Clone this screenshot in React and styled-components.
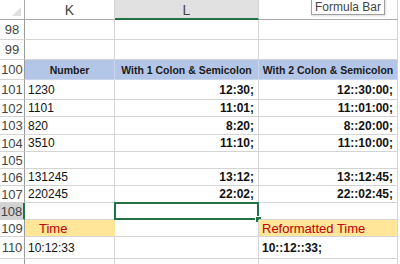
import React from "react";
import styled, { createGlobalStyle } from "styled-components";

const GlobalStyle = createGlobalStyle`
  html, body {
    margin: 0;
    padding: 0;
    background: #fff;
    overflow: hidden;
  }
`;

const COLS = ["K", "L", "M"];
const ROW_HEIGHTS = {
  98: 20, 99: 20, 100: 20, 101: 20, 102: 17, 103: 18, 104: 17,
  105: 17, 106: 17, 107: 17, 108: 17, 109: 17, 110: 22, 111: 20,
};

const rows = [
  { n: 98 },
  { n: 99 },
  { n: 100, head: ["Number", "With 1 Colon & Semicolon", "With 2 Colon & Semicolon"] },
  { n: 101, cells: ["1230", "12:30;", "12::30:00;"] },
  { n: 102, cells: ["1101", "11:01;", "11::01:00;"] },
  { n: 103, cells: ["820", "8:20;", "8::20:00;"] },
  { n: 104, cells: ["3510", "11:10;", "11::10:00;"] },
  { n: 105 },
  { n: 106, cells: ["131245", "13:12;", "13::12:45;"] },
  { n: 107, cells: ["220245", "22:02;", "22::02:45;"] },
  { n: 108, selected: true },
  { n: 109, labels: true },
  { n: 110, last: true },
  { n: 111, hidden: true },
];

export default function App() {
  return (
    <>
      <GlobalStyle />
      <Sheet>
        <Grid
          style={{
            gridTemplateRows: `20px ${rows.map((r) => ROW_HEIGHTS[r.n] + "px").join(" ")}`,
          }}
        >
          <Corner>
            <CornerMark />
          </Corner>
          {COLS.map((c) => (
            <ColHead key={c} active={c === "L"}>
              {c}
            </ColHead>
          ))}
          {rows.map((r) => (
            <React.Fragment key={r.n}>
              <RowHead active={r.selected}>{r.hidden ? null : r.n}</RowHead>
              {r.head &&
                r.head.map((t) => (
                  <HeadCell key={t}>{t}</HeadCell>
                ))}
              {r.cells && (
                <>
                  <Cell>{r.cells[0]}</Cell>
                  <Cell bold align="right">{r.cells[1]}</Cell>
                  <Cell bold align="right">{r.cells[2]}</Cell>
                </>
              )}
              {r.selected && (
                <>
                  <Cell />
                  <Cell>
                    <Selection>
                      <FillHandle />
                    </Selection>
                  </Cell>
                  <Cell />
                </>
              )}
              {r.labels && (
                <>
                  <LabelCell indent>Time</LabelCell>
                  <Cell />
                  <LabelCell>Reformatted Time</LabelCell>
                </>
              )}
              {r.last && (
                <>
                  <Cell>10:12:33</Cell>
                  <Cell />
                  <Cell bold>10::12::33;</Cell>
                </>
              )}
              {!r.head && !r.cells && !r.selected && !r.labels && !r.last && (
                <>
                  <Cell />
                  <Cell />
                  <Cell />
                </>
              )}
            </React.Fragment>
          ))}
        </Grid>
        <Tooltip>Formula Bar</Tooltip>
      </Sheet>
    </>
  );
}

const Sheet = styled.div`
  position: relative;
  width: 400px;
  height: 264px;
  overflow: hidden;
  background: #fff;
`;

const Grid = styled.div`
  display: grid;
  grid-template-columns: 25px 90px 144px 139px 20px;
  font-family: "Liberation Sans", Arial, sans-serif;
  color: #222;
`;

const Corner = styled.div`
  position: relative;
  background: #fff;
  border-right: 1px solid #ababab;
  border-bottom: 1px solid #ababab;
  grid-column: 1;
`;

const CornerMark = styled.div`
  position: absolute;
  right: 3px;
  bottom: 3px;
  width: 0;
  height: 0;
  border-left: 9px solid transparent;
  border-bottom: 9px solid #dfdfdf;
`;

const ColHead = styled.div`
  display: flex;
  align-items: center;
  justify-content: center;
  font-family: "Liberation Sans", Arial, sans-serif;
  font-size: 14px;
  color: #444;
  background: ${(p) => (p.active ? "#e1e1e1" : "#fff")};
  border-right: 1px solid #d4d4d4;
  border-bottom: ${(p) => (p.active ? "2px solid #217346" : "1px solid #ababab")};
  box-sizing: border-box;
  padding-top: ${(p) => (p.active ? "1px" : "0")};
`;

const RowHead = styled.div`
  grid-column: 1;
  display: flex;
  align-items: center;
  justify-content: center;
  font-size: 13px;
  color: #444;
  background: ${(p) => (p.active ? "#d2d2d2" : "#fff")};
  border-right: ${(p) => (p.active ? "2px solid #217346" : "1px solid #9b9b9b")};
  border-bottom: 1px solid #d4d4d4;
  box-sizing: border-box;
`;

const Cell = styled.div`
  position: relative;
  display: flex;
  align-items: center;
  justify-content: ${(p) => (p.align === "right" ? "flex-end" : "flex-start")};
  padding: 0 4px 0 3px;
  font-size: 12px;
  font-weight: ${(p) => (p.bold ? 700 : 400)};
  color: #111;
  white-space: nowrap;
  border-right: 1px solid #d4d4d4;
  border-bottom: 1px solid #d4d4d4;
  box-sizing: border-box;
  min-width: 0;
`;

const HeadCell = styled(Cell)`
  justify-content: center;
  padding: 0;
  background: #b4c6e7;
  font-size: 10.5px;
  font-weight: 700;
  color: #1a1a1a;
  border-right-color: #c9d5ec;
  border-bottom-color: #c9d5ec;
`;

const LabelCell = styled(Cell)`
  background: #ffe699;
  color: #c00000;
  font-size: 13px;
  padding-left: ${(p) => (p.indent ? "14px" : "3px")};
  border-right-color: ${(p) => (p.indent ? "#ffe699" : "#d4d4d4")};
`;

const Selection = styled.div`
  position: absolute;
  left: -1px;
  top: -1px;
  right: -1px;
  bottom: -1px;
  border: 2px solid #217346;
  pointer-events: none;
`;

const FillHandle = styled.div`
  position: absolute;
  right: -5px;
  bottom: -5px;
  width: 5px;
  height: 5px;
  background: #217346;
  border: 1px solid #fff;
`;

const Tooltip = styled.div`
  position: absolute;
  left: 311px;
  top: -2px;
  height: 15px;
  padding: 0 3px;
  display: flex;
  align-items: center;
  background: #fff;
  border: 1px solid #a0a0a0;
  box-shadow: 1px 1px 2px rgba(0, 0, 0, 0.15);
  font-family: "Liberation Sans", Arial, sans-serif;
  font-size: 12px;
  color: #444;
  white-space: nowrap;
`;
